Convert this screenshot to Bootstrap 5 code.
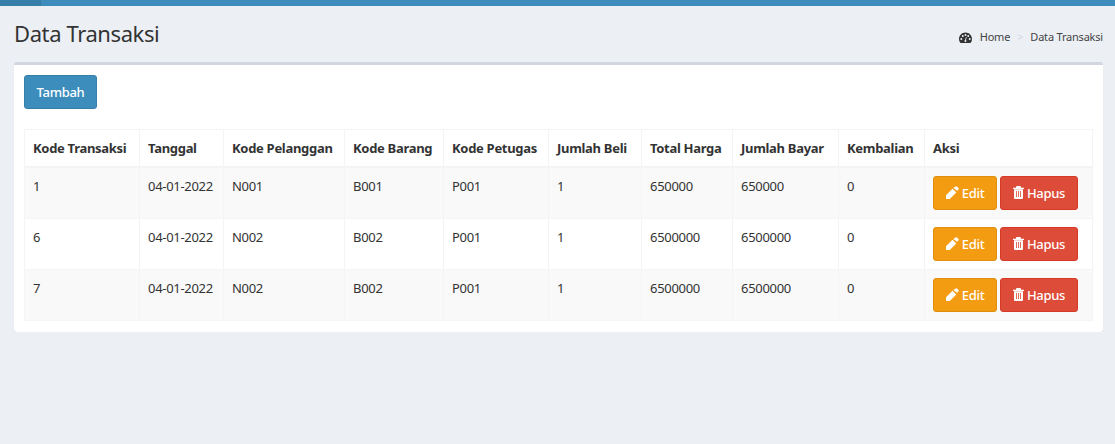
<!doctype html>
<html lang="id">
<head>
  <meta charset="utf-8">
  <meta name="viewport" content="width=device-width, initial-scale=1">
  <title>Data Transaksi</title>
  <link href="https://cdn.jsdelivr.net/npm/bootstrap@5.3.0/dist/css/bootstrap.min.css" rel="stylesheet">
  <style>
    body {
      background: #ecf0f5;
      color: #333;
      font-family: "Noto Sans", "Open Sans", sans-serif;
      font-size: 13px;
      line-height: 20px;
      letter-spacing: -.3px;
    }
    .top-strip { height: 6px; background: #3c8dbc; }
    .top-strip-logo { width: 41px; height: 6px; background: #367fa9; }
    .page-head { padding: 14px 12px 0 14px; height: 56px; }
    .page-head h1 { font-size: 22px; line-height: 26px; margin: 0; font-weight: 400; color: #333; letter-spacing: -.4px; }
    .crumbs { font-size: 11px; margin: 7px 0 0; color: #444; letter-spacing: -.2px; --bs-breadcrumb-item-padding-x: 7px; }
    .crumbs a { color: #444; text-decoration: none; }
    .crumbs .breadcrumb-item + .breadcrumb-item::before { content: ">"; color: #d2d6de; }
    .crumbs .breadcrumb-item.active { color: #444; }
    .data-box {
      margin: 0 12px 0 14px;
      border: 0;
      border-top: 3px solid #d2d6de;
      border-radius: 3px;
      box-shadow: 0 1px 1px rgba(0,0,0,.1);
      padding: 10px;
      height: 270px;
    }
    .btn-tambah, .btn-edit, .btn-hapus {
      border-radius: 3px;
      font-size: 13px;
      line-height: 20px;
      letter-spacing: -.3px;
      height: 34px;
      color: #fff;
      font-weight: 500;
    }
    .btn-tambah { width: 73px; background: #3c8dbc; border: 1px solid #367fa9; padding: 6px 0; }
    .btn-edit { width: 64px; background: #f39c12; border: 1px solid #e08e0b; padding: 6px 0; }
    .btn-hapus { width: 78px; background: #dd4b39; border: 1px solid #d73925; padding: 6px 0; margin-left: 3px; }
    .btn-edit svg, .btn-hapus svg { vertical-align: -1px; fill: #fff; }
    .data-table { margin: 20px 0 0; width: 1068px; table-layout: fixed; --bs-table-border-color: #f4f4f4; --bs-table-striped-bg: #f9f9f9; --bs-table-color: #333; --bs-table-striped-color: #333; }
    .data-table th { padding: 8px; height: 37px; font-weight: 700; border-bottom-width: 2px; vertical-align: middle; white-space: nowrap; }
    .data-table td { padding: 8px; height: 51px; white-space: nowrap; }
    .w1 { width: 115px; } .w2 { width: 84px; } .w3 { width: 121px; } .w4 { width: 99px; } .w5 { width: 105px; }
    .w6 { width: 93px; } .w7 { width: 91px; } .w8 { width: 106px; } .w9 { width: 86px; } .w10 { width: 168px; }
  </style>
</head>
<body>
  <div class="top-strip"><div class="top-strip-logo"></div></div>

  <div class="page-head d-flex justify-content-between align-items-start">
    <h1>Data Transaksi</h1>
    <ol class="breadcrumb crumbs">
      <li class="breadcrumb-item">
        <a href="#">
          <svg width="13" height="12" viewBox="0 0 13 12" class="me-2"><path fill="#333" fill-rule="evenodd" d="M6.500.5C2.900.5 0 3.400 0 7c0 1.300.4 2.600 1.100 3.600.1.200.3.300.5.300h9.800c.2 0 .4-.1.500-.3C12.600 9.600 13 8.300 13 7 13 3.400 10.100.5 6.500.5zM2.300 8a1 1 0 1 1 0-2 1 1 0 0 1 0 2zm1.500-3a1 1 0 1 1 0-2 1 1 0 0 1 0 2zm2.700-.9a1 1 0 1 1 0-2 1 1 0 0 1 0 2zm1 4.900a1 1 0 0 1-2 0c0-.4.300-.8.600-.9l.9-3.100.7.200-.8 3c.4.200.6.500.6.800zM9.200 5a1 1 0 1 1 0-2 1 1 0 0 1 0 2zm1.500 3a1 1 0 1 1 0-2 1 1 0 0 1 0 2z"/></svg>Home
        </a>
      </li>
      <li class="breadcrumb-item active">Data Transaksi</li>
    </ol>
  </div>

  <div class="card data-box">
    <div><button class="btn btn-tambah">Tambah</button></div>
    <table class="table table-bordered table-striped data-table">
      <colgroup>
        <col class="w1"><col class="w2"><col class="w3"><col class="w4"><col class="w5">
        <col class="w6"><col class="w7"><col class="w8"><col class="w9"><col class="w10">
      </colgroup>
      <thead>
        <tr>
          <th>Kode Transaksi</th><th>Tanggal</th><th>Kode Pelanggan</th><th>Kode Barang</th><th>Kode Petugas</th>
          <th>Jumlah Beli</th><th>Total Harga</th><th>Jumlah Bayar</th><th>Kembalian</th><th>Aksi</th>
        </tr>
      </thead>
      <tbody>
        <tr>
          <td>1</td><td>04-01-2022</td><td>N001</td><td>B001</td><td>P001</td><td>1</td><td>650000</td><td>650000</td><td>0</td>
          <td>
            <button class="btn btn-edit"><svg width="13" height="13" viewBox="0 0 13 13"><path d="M9.600.6a1 1 0 0 1 1.400 0l1.400 1.400a1 1 0 0 1 0 1.400l-1.300 1.300L7.300 1.900zM6.500 2.700l3.800 3.800L3.800 13H0V9.200z"/></svg> Edit</button><button class="btn btn-hapus"><svg width="11" height="13" viewBox="0 0 11 13"><path fill-rule="evenodd" d="M3.500 0h4l.7 1.700H11v1.300H0V1.700h2.800zM1 3.300h9V12a1 1 0 0 1-1 1H2a1 1 0 0 1-1-1zM3.100 5v6h.8V5zm2 0v6h.8V5zm2 0v6h.8V5z"/></svg> Hapus</button>
          </td>
        </tr>
        <tr>
          <td>6</td><td>04-01-2022</td><td>N002</td><td>B002</td><td>P001</td><td>1</td><td>6500000</td><td>6500000</td><td>0</td>
          <td>
            <button class="btn btn-edit"><svg width="13" height="13" viewBox="0 0 13 13"><path d="M9.600.6a1 1 0 0 1 1.400 0l1.400 1.400a1 1 0 0 1 0 1.400l-1.300 1.300L7.300 1.900zM6.500 2.700l3.800 3.800L3.800 13H0V9.200z"/></svg> Edit</button><button class="btn btn-hapus"><svg width="11" height="13" viewBox="0 0 11 13"><path fill-rule="evenodd" d="M3.500 0h4l.7 1.700H11v1.300H0V1.700h2.800zM1 3.300h9V12a1 1 0 0 1-1 1H2a1 1 0 0 1-1-1zM3.100 5v6h.8V5zm2 0v6h.8V5zm2 0v6h.8V5z"/></svg> Hapus</button>
          </td>
        </tr>
        <tr>
          <td>7</td><td>04-01-2022</td><td>N002</td><td>B002</td><td>P001</td><td>1</td><td>6500000</td><td>6500000</td><td>0</td>
          <td>
            <button class="btn btn-edit"><svg width="13" height="13" viewBox="0 0 13 13"><path d="M9.600.6a1 1 0 0 1 1.400 0l1.400 1.400a1 1 0 0 1 0 1.400l-1.300 1.300L7.300 1.900zM6.500 2.700l3.800 3.800L3.800 13H0V9.200z"/></svg> Edit</button><button class="btn btn-hapus"><svg width="11" height="13" viewBox="0 0 11 13"><path fill-rule="evenodd" d="M3.500 0h4l.7 1.700H11v1.300H0V1.700h2.800zM1 3.300h9V12a1 1 0 0 1-1 1H2a1 1 0 0 1-1-1zM3.100 5v6h.8V5zm2 0v6h.8V5zm2 0v6h.8V5z"/></svg> Hapus</button>
          </td>
        </tr>
      </tbody>
    </table>
  </div>

  <script src="https://cdn.jsdelivr.net/npm/bootstrap@5.3.0/dist/js/bootstrap.bundle.min.js"></script>
</body>
</html>
